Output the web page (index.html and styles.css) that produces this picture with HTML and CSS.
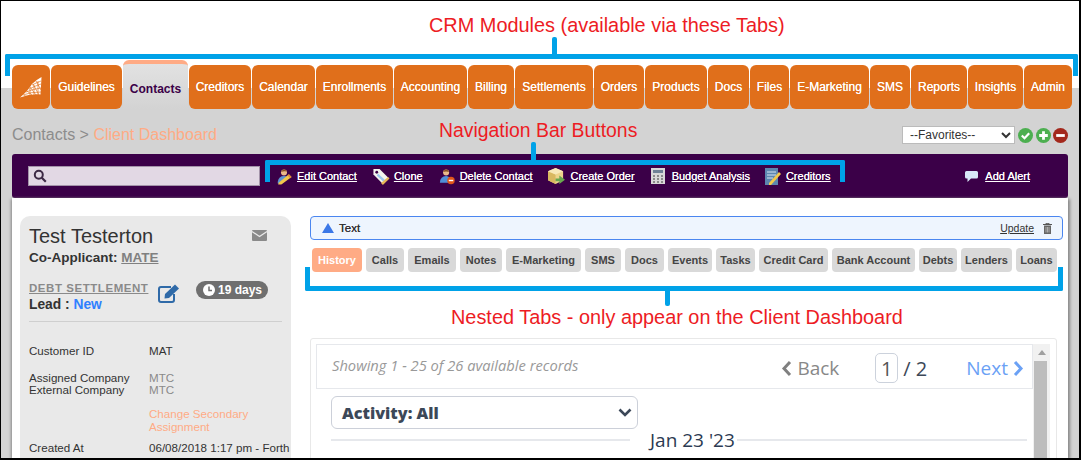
FILE: index.html
```html
<!DOCTYPE html>
<html lang="en">
<head>
<meta charset="utf-8">
<title>Client Dashboard</title>
<link rel="stylesheet" href="styles.css">
</head>
<body>
<div class="frame">
  <nav class="tabs">
    <a class="tab logo"><svg width="22" height="21" viewBox="0 0 22 21"><path d="M0 20.500Q8 14 12 7Q16 3 21.500 0L20.500 17.500Q11 16.500 0 20.500Z" fill="#fff"/><path d="M4 18.500L7 19.500M7 14L12 18M10 10L16 18M13 7L19 18M16 4L21 13M3 18Q10 15 21 15M6 15Q13 12 21 11M9 12Q15 9 21 7M12 8Q16 6 21 4M10 12V18M14 8V18M18 4V18" stroke="#e06f1b" stroke-width=".65" fill="none"/></svg></a>
    <a class="tab">Guidelines</a>
    <a class="tab active">Contacts</a>
    <a class="tab">Creditors</a>
    <a class="tab">Calendar</a>
    <a class="tab">Enrollments</a>
    <a class="tab">Accounting</a>
    <a class="tab">Billing</a>
    <a class="tab">Settlements</a>
    <a class="tab">Orders</a>
    <a class="tab">Products</a>
    <a class="tab">Docs</a>
    <a class="tab">Files</a>
    <a class="tab">E-Marketing</a>
    <a class="tab">SMS</a>
    <a class="tab">Reports</a>
    <a class="tab">Insights</a>
    <a class="tab">Admin</a>
  </nav>

  <div class="crumbs">
    <div class="crumb-text">Contacts &gt; <span class="crumb-current">Client Dashboard</span></div>
    <div class="favorites">
      <select class="fav-select"><option>--Favorites--</option></select>
      <svg class="fav-icon" viewBox="0 0 15 15"><circle cx="7.500" cy="7.500" r="7.500" fill="#4caf50"/><path d="M3.800 7.500l2.700 2.700L11.200 5.200" stroke="#fff" stroke-width="2.200" fill="none"/></svg>
      <svg class="fav-icon" viewBox="0 0 15 15"><circle cx="7.500" cy="7.500" r="7.500" fill="#4caf50"/><path d="M7.500 3.200v8.600M3.200 7.500h8.600" stroke="#fff" stroke-width="2.800"/></svg>
      <svg class="fav-icon" viewBox="0 0 15 15"><circle cx="7.500" cy="7.500" r="7.500" fill="#a3281c"/><path d="M3.200 7.500h8.600" stroke="#fff" stroke-width="2.800"/></svg>
    </div>
  </div>

  <div class="bar">
    <div class="search"><svg width="14" height="14" viewBox="0 0 14 14"><circle cx="5.800" cy="5.800" r="4" fill="none" stroke="#3d2a45" stroke-width="2"/><path d="M8.800 8.800l4 4" stroke="#3d2a45" stroke-width="2.200"/></svg></div>
    <div class="bar-links">
      <a class="bar-link"><svg class="bar-icon" viewBox="0 0 18 18"><circle cx="9" cy="4.500" r="3.400" fill="#eab98a"/><path d="M5.500 4Q8.500 -1.500 12.500 3.500Q9 2.500 5.500 4Z" fill="#8a5222"/><path d="M2 15Q3 8.500 9 8.500Q12 8.500 13 10L7 17H2Z" fill="#5c93d2"/><path d="M3 16L14.500 6.500L17.500 9.500L6 18L2.500 18Z" fill="#f2c84b"/><path d="M14.500 6.500L17.500 9.500L16 11L13 8Z" fill="#e08a3a"/></svg><span>Edit Contact</span></a>
      <a class="bar-link"><svg class="bar-icon tag" viewBox="0 0 18 18"><path d="M1 1H7.500L17 10.500L11 17L1 7Z" fill="#f4f4ee"/><circle cx="4.500" cy="4.500" r="1.500" fill="#3b0048"/><path d="M6 6L13 12.500L11.500 14.500L4.500 8Z" fill="#9cc7ee"/><path d="M9 16L16.500 9.500L18 11L11 18Z" fill="#e8b858"/></svg><span>Clone</span></a>
      <a class="bar-link"><svg class="bar-icon" viewBox="0 0 18 18"><circle cx="8" cy="4.500" r="3.400" fill="#eab98a"/><path d="M4.500 4Q8 -1.500 11.500 4Q8 2.500 4.500 4Z" fill="#8a5222"/><path d="M1 16Q1.500 8.500 8 8.500Q13 8.500 14 16Z" fill="#4f8fd8"/><circle cx="13.500" cy="13.500" r="4.200" fill="#e0561a"/><path d="M11 13.500h5" stroke="#fff" stroke-width="1.600"/></svg><span>Delete Contact</span></a>
      <a class="bar-link"><svg class="bar-icon box" viewBox="0 0 18 18"><path d="M8 0L16 3.500V13L8 17L0 13V3.500Z" fill="#eed48c"/><path d="M0 3.500L8 7V17L0 13Z" fill="#d9b860"/><path d="M8 0L16 3.500L8 7L0 3.500Z" fill="#f8e8b8"/><path d="M8 11H12V8L18 12.500L12 17V14H8Z" fill="#6aa84f"/></svg><span>Create Order</span></a>
      <a class="bar-link"><svg class="bar-icon calc" viewBox="0 0 14 16"><rect width="14" height="16" fill="#d8d8d8"/><rect x="2" y="2" width="10" height="3" fill="#6f8296"/><path d="M2 7h2v2H2zM6 7h2v2H6zM10 7h2v2h-2zM2 10h2v2H2zM6 10h2v2H6zM10 10h2v2h-2zM2 13h2v2H2zM6 13h2v2H6zM10 13h2v2h-2z" fill="#8a8a8a"/></svg><span>Budget Analysis</span></a>
      <a class="bar-link"><svg class="bar-icon book" viewBox="0 0 16 17"><rect width="13" height="17" fill="#5c86b0"/><path d="M2 4h9M2 7h9M2 10h6" stroke="#d7e5f2"/><path d="M4 15L14 4L16 6L6 17H4Z" fill="#f2c84b"/></svg><span>Creditors</span></a>
    </div>
    <a class="bar-link alert-link"><svg class="bar-icon bubble" viewBox="0 0 13 11"><path d="M1.500 0H11.500Q13 0 13 1.500V6Q13 7.500 11.500 7.500H6L2.500 11V7.500H1.500Q0 7.500 0 6V1.500Q0 0 1.500 0Z" fill="#d7e8f7"/></svg><span>Add Alert</span></a>
  </div>

  <div class="panel">
    <aside class="card">
      <div class="card-head">
        <span class="name">Test Testerton</span>
        <svg class="mail" width="15" height="11" viewBox="0 0 15 11"><rect width="15" height="11" rx="1" fill="#8a8a8a"/><path d="M0 1.500L7.500 6.500L15 1.500" stroke="#e9e9e9" stroke-width="1.200" fill="none"/></svg>
      </div>
      <div class="coapp">Co-Applicant: <a class="coapp-link">MATE</a></div>
      <div class="status">
        <div class="status-text">
          <a class="program">DEBT SETTLEMENT</a>
          <div class="lead">Lead : <span class="lead-new">New</span></div>
        </div>
        <svg class="edit" width="21" height="19" viewBox="0 0 21 19"><path d="M13 3H3Q1 3 1 5V16Q1 18 3 18H14Q16 18 16 16V10" fill="none" stroke="#2f6aa8" stroke-width="2"/><path d="M7 10L17 .5L21 4.500L11 14L6.500 14.500Z" fill="#2f6aa8"/></svg>
        <span class="badge"><svg width="12" height="12" viewBox="0 0 12 12"><circle cx="6" cy="6" r="6" fill="#fff"/><path d="M6 2.500V6.500H9" stroke="#6f6f6f" stroke-width="1.500" fill="none"/></svg>19 days</span>
      </div>
      <hr class="divider">
      <dl class="facts">
        <dt>Customer ID</dt><dd class="dark">MAT</dd>
        <dt class="gap">Assigned Company<br>External Company</dt><dd class="gap muted">MTC<br>MTC</dd>
        <dd class="change">Change Secondary<br>Assignment</dd>
        <dt class="created">Created At</dt><dd class="created dark">06/08/2018 1:17 pm - Forth</dd>
      </dl>
    </aside>

    <section class="content">
      <div class="notice">
        <svg width="12" height="10" viewBox="0 0 12 10"><path d="M6 0L12 10H0Z" fill="#3b78e7"/></svg>
        <span class="notice-text">Text</span>
        <a class="update">Update</a>
        <svg width="9" height="11" viewBox="0 0 9 11"><path d="M0 1.500H9M3 1.500V.3H6V1.500" stroke="#555" fill="none"/><path d="M1 2.500H8V11H1Z" fill="#666"/><path d="M3 4V9.500M4.500 4V9.500M6 4V9.500" stroke="#ddd" stroke-width=".6"/></svg>
      </div>
      <div class="subtabs">
        <a class="subtab on">History</a>
        <a class="subtab">Calls</a>
        <a class="subtab">Emails</a>
        <a class="subtab">Notes</a>
        <a class="subtab">E-Marketing</a>
        <a class="subtab">SMS</a>
        <a class="subtab">Docs</a>
        <a class="subtab">Events</a>
        <a class="subtab">Tasks</a>
        <a class="subtab">Credit Card</a>
        <a class="subtab">Bank Account</a>
        <a class="subtab">Debts</a>
        <a class="subtab">Lenders</a>
        <a class="subtab">Loans</a>
      </div>
      <div class="records">
        <div class="records-main">
          <div class="pager">
            <span class="showing">Showing 1 - 25 of 26 available records</span>
            <span class="back"><svg width="11" height="17" viewBox="0 0 11 17"><path d="M9 2L3 8.500L9 15" stroke="#808080" stroke-width="3" fill="none"/></svg>Back</span>
            <span class="page-box">1</span>
            <span class="page-of">/ 2</span>
            <span class="next">Next<svg width="11" height="17" viewBox="0 0 11 17"><path d="M2 2L8 8.500L2 15" stroke="#6ba1f5" stroke-width="3" fill="none"/></svg></span>
          </div>
          <div class="filter">
            <span>Activity: All</span>
            <svg width="14" height="9" viewBox="0 0 14 9"><path d="M1.500 1.500L7 7L12.500 1.500" stroke="#3c4858" stroke-width="2.600" fill="none"/></svg>
          </div>
          <div class="date-row">
            <span class="rule first"></span>
            <span class="date">Jan 23 '23</span>
            <span class="rule last"></span>
          </div>
        </div>
        <div class="scrollbar">
          <svg width="8" height="5" viewBox="0 0 8 5"><path d="M4 0L8 5H0Z" fill="#a0a0a0"/></svg>
          <div class="thumb"></div>
        </div>
      </div>
    </section>
  </div>

  <div class="note note-modules">CRM Modules (available via these Tabs)</div>
  <div class="note note-nav">Navigation Bar Buttons</div>
  <div class="note note-nested">Nested Tabs - only appear on the Client Dashboard</div>

  <div class="bracket bracket-modules"></div>
  <div class="stem stem-modules"></div>
  <div class="bracket bracket-nav"></div>
  <div class="stem stem-nav"></div>
  <div class="bracket bracket-nested"></div>
  <div class="stem stem-nested"></div>
</div>
</body>
</html>
```
FILE: styles.css
```css
* { box-sizing: border-box; }
html, body { margin: 0; padding: 0; }
body { width: 1081px; height: 460px; overflow: hidden; font-family: "Liberation Sans", Arial, sans-serif; }
.frame {
  position: relative;
  width: 1081px;
  height: 460px;
  border: 1px solid #000;
  border-right-width: 2px;
  border-bottom-width: 2px;
  overflow: hidden;
  background: linear-gradient(#fff 0, #fff 87px, #d3d3d3 87px);
  display: flex;
  flex-direction: column;
}

/* main tabs */
.tabs {
  display: grid;
  grid-template-columns: 38px 71px 65px 62px 63px 77px 73px 46px 78px 50px 62px 41px 39px 79px 40px 56px 55px 48px;
  column-gap: 1px;
  height: 44px;
  margin: 64px 0 0 11px;
}
.tab {
  display: flex;
  align-items: center;
  justify-content: center;
  background: #e06f1b;
  border-radius: 6px;
  color: #fff;
  font-size: 12px;
  text-shadow: 0 0 .6px #fff;
}
.tab.active {
  margin-top: -5px;
  padding-top: 5px;
  background: linear-gradient(#e2e2e2, #d3d3d3);
  border-top: 4px solid #ffab85;
  border-radius: 6px 6px 0 0;
  color: #3b0048;
  font-weight: bold;
  text-shadow: none;
}

/* breadcrumb */
.crumbs {
  display: flex;
  justify-content: space-between;
  height: 45px;
  padding: 17px 11px 0 11px;
}
.crumb-text { font-size: 16px; line-height: 18px; color: #8c8c8c; }
.crumb-current { color: #ffab85; }
.favorites { display: flex; align-items: center; height: 18px; gap: 2.500px; }
.fav-select {
  width: 113px;
  height: 18px;
  margin-right: .5px;
  padding: 0 0 0 3px;
  border: 1px solid #bbb;
  border-radius: 0;
  background: #fff;
  color: #333;
  font: 12px "Liberation Sans", Arial, sans-serif;
}
.fav-icon { width: 15px; height: 15px; }

/* purple bar */
.bar {
  display: flex;
  align-items: center;
  flex: none;
  height: 44px;
  margin: 0 11px;
  padding-left: 16px;
  border-radius: 3px;
  background: #3b0048;
}
.search {
  display: flex;
  align-items: center;
  width: 232px;
  height: 20px;
  padding-left: 4px;
  border: 1px solid #a393a9;
  background: #e2d8e4;
}
.bar-links { display: flex; margin-left: 16px; gap: 16px; }
.bar-link {
  display: flex;
  align-items: center;
  gap: 5px;
  color: #fff;
  font-size: 11px;
  text-shadow: 0 0 .5px #fff;
}
.bar-link span { text-decoration: underline; }
.bar-icon { width: 16px; height: 17px; flex: none; }
.bar-icon.tag { width: 18px; margin-left: -1px; margin-right: -1px; }
.bar-icon.box { width: 17px; }
.bar-icon.calc { width: 14px; height: 16px; margin-right: 2px; }
.bar-icon.book { margin-left: -1px; }
.bar-icon.bubble { width: 13px; height: 11px; margin-right: 2px; }
.alert-link { margin-left: auto; margin-right: 38px; }

/* white panel */
.panel {
  display: flex;
  flex: 1;
  min-height: 0;
  margin: 0 11px;
  padding: 18px 5px 0 8px;
  background: #fff;
  box-shadow: -1px 1px 3px #888, 2px 1px 3px #888;
}

/* client card */
.card {
  flex: none;
  width: 271px;
  height: 320px;
  padding: 8px 9px 0 9px;
  border-radius: 10px;
  background: #e9e9e9;
  color: #333;
}
.card-head { display: flex; justify-content: space-between; height: 24px; }
.name { font-size: 20px; line-height: 24px; }
.mail { margin: 6px 15px 0 0; }
.coapp { margin-top: 2px; font-size: 13.500px; font-weight: bold; line-height: 15px; }
.coapp-link { color: #808080; text-decoration: underline; }
.status { display: flex; margin-top: 16px; height: 40px; }
.status-text { width: 129px; }
.program { display: block; color: #8a8a8a; font-size: 11.500px; font-weight: bold; line-height: 14px; letter-spacing: .55px; text-decoration: underline; }
.lead { margin-top: 2px; font-size: 13.800px; font-weight: bold; line-height: 15px; }
.lead-new { color: #2f80ff; }
.edit { margin-top: 3px; }
.badge {
  display: flex;
  align-items: center;
  gap: 3px;
  width: 72px;
  height: 18px;
  margin: 0 0 0 17px;
  padding-left: 7px;
  border-radius: 9px;
  background: #6f6f6f;
  color: #fff;
  font-size: 12px;
  font-weight: bold;
}
.divider { height: 1px; margin: 0; border: 0; background: #cfcfcf; }
.facts {
  display: grid;
  grid-template-columns: 120px 1fr;
  margin: 23px 0 0;
  font-size: 11.600px;
  line-height: 12px;
}
.facts dt, .facts dd { margin: 0; }
.facts .dark { color: #333; }
.facts .muted { color: #8a8a8a; }
.facts .gap { margin-top: 15px; }
.facts .change { grid-column: 2; margin-top: 11px; color: #ffab85; line-height: 13px; }
.facts .created { margin-top: 9px; white-space: nowrap; }

/* right column */
.content { flex: none; width: 753px; margin-left: 19px; }
.notice {
  display: flex;
  align-items: center;
  height: 24px;
  padding: 0 10px 0 11px;
  border: 1px solid #4a86f0;
  border-radius: 4px;
  background: #eef5fe;
  color: #333;
  font-size: 11px;
}
.notice-text { margin-left: 5px; font-size: 11.500px; text-shadow: 0 0 .5px #333; }
.update { margin-left: auto; margin-right: 9px; text-decoration: underline; font-size: 10.500px; }
.subtabs {
  display: grid;
  grid-template-columns: 50px 38px 48px 42px 75px 36px 39px 44px 39px 69px 83px 38px 51px 41px;
  column-gap: 4px;
  height: 24px;
  margin: 8px 0 0 2px;
}
.subtab {
  display: flex;
  align-items: center;
  justify-content: center;
  border-radius: 4px;
  background: #d9d9d9;
  color: #444;
  font-size: 11px;
  font-weight: bold;
}
.subtab.on { background: #ffab85; color: #fff; }

/* records */
.records {
  display: flex;
  width: 747px;
  height: 140px;
  margin-top: 66px;
  padding: 5px 5px 0 5px;
  border: 1px solid #e8e8e8;
  border-radius: 3px 3px 0 0;
}
.records-main { flex: none; width: 717px; }
.pager {
  display: flex;
  align-items: center;
  height: 45px;
  padding: 0 8px 0 15px;
  border: 1px solid #e6e8ec;
  font-family: "Open Sans", sans-serif;
}
.showing { margin-bottom: 3px; font-size: 14.700px; font-style: italic; color: #999; }
.back { display: flex; align-items: center; gap: 5px; margin: 3px 36px 0 auto; font-size: 19px; color: #888; }
.page-box {
  display: flex;
  align-items: center;
  justify-content: center;
  width: 23px;
  height: 30px;
  margin-top: 3px;
  border: 1px solid #ccd2dc;
  border-radius: 5px;
  color: #555;
  font-size: 20px;
}
.page-of { margin: 3px 39px 0 5px; color: #3c4858; font-size: 20px; }
.next { display: flex; align-items: center; gap: 5px; margin-top: 3px; color: #6ba1f5; font-size: 19px; }
.filter {
  display: flex;
  align-items: center;
  justify-content: space-between;
  width: 307px;
  height: 33px;
  margin: 7px 0 0 15px;
  padding: 0 5px 0 10px;
  border: 1px solid #ccd0d9;
  border-radius: 6px;
  color: #3c4858;
  font-family: "Open Sans", sans-serif;
  font-size: 16.200px;
  font-weight: 800;
}
.date-row { display: flex; align-items: center; height: 22px; margin-left: 15px; color: #2c3a52; font-family: "Open Sans", sans-serif; font-size: 19px; }
.rule { height: 2px; background: #e6e8ec; }
.rule.first { width: 299px; }
.rule.last { width: 290px; }
.date { margin: 0 2px 0 20px; white-space: nowrap; }
.scrollbar {
  display: flex;
  flex-direction: column;
  align-items: center;
  width: 17px;
  background: #f1f1f1;
}
.scrollbar svg { margin-top: 6px; }
.thumb { width: 13px; height: 100px; margin: 6px 2px 0 0; background: #bdbdbd; }

/* annotations, laid over the screenshot */
.note { position: absolute; color: #ed1c24; white-space: nowrap; font-size: 19.900px; line-height: 24px; }
.note-modules { left: 428px; top: 12px; }
.note-nav { left: 438px; top: 117px; font-size: 19.400px; }
.note-nested { left: 450px; top: 304px; }
.bracket { position: absolute; border: 5px solid #00a2e8; border-bottom: 0; border-radius: 2px 2px 0 0; }
.stem { position: absolute; width: 5px; background: #00a2e8; border-radius: 2px 2px 0 0; }
.bracket-modules { left: 4px; top: 53px; width: 1073px; height: 22px; }
.stem-modules { left: 551px; top: 36px; height: 18px; }
.bracket-nav { left: 264px; top: 159px; width: 580px; height: 22px; }
.stem-nav { left: 530px; top: 141px; height: 19px; }
.bracket-nested { left: 304px; top: 266px; width: 758px; height: 24px; border-top: 0; border-bottom: 5px solid #00a2e8; border-radius: 0 0 2px 2px; }
.stem-nested { left: 664px; top: 289px; height: 16px; border-radius: 0 0 2px 2px; }
```
